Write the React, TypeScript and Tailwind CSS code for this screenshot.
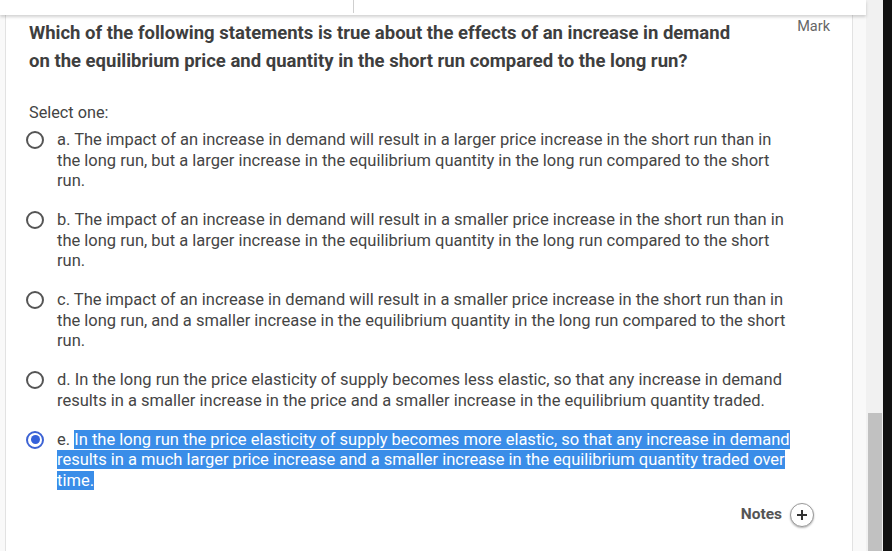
const options = [
  {
    key: "a",
    text: "The impact of an increase in demand will result in a larger price increase in the short run than in the long run, but a larger increase in the equilibrium quantity in the long run compared to the short run.",
  },
  {
    key: "b",
    text: "The impact of an increase in demand will result in a smaller price increase in the short run than in the long run, but a larger increase in the equilibrium quantity in the long run compared to the short run.",
  },
  {
    key: "c",
    text: "The impact of an increase in demand will result in a smaller price increase in the short run than in the long run, and a smaller increase in the equilibrium quantity in the long run compared to the short run.",
  },
  {
    key: "d",
    text: "In the long run the price elasticity of supply becomes less elastic, so that any increase in demand results in a smaller increase in the price and a smaller increase in the equilibrium quantity traded.",
  },
  {
    key: "e",
    text: "In the long run the price elasticity of supply becomes more elastic, so that any increase in demand results in a much larger price increase and a smaller increase in the equilibrium quantity traded over time.",
    selected: true,
  },
];

function Radio({ checked }: { checked?: boolean }) {
  if (checked) {
    return (
      <span className="mt-[1px] flex h-[18px] w-[18px] shrink-0 items-center justify-center rounded-full border-[2.5px] border-[#3d63d4] bg-white">
        <span className="h-[9px] w-[9px] rounded-full bg-[#3561da]" />
      </span>
    );
  }
  return <span className="mt-[1px] h-[18px] w-[18px] shrink-0 rounded-full border-2 border-[#555]" />;
}

export default function App() {
  return (
    <div
      className="flex h-[551px] w-[892px] overflow-hidden bg-[#111]"
      style={{ fontFamily: "Roboto, 'Liberation Sans', sans-serif" }}
    >
      <div className="flex w-[866px] flex-col bg-[#f9f9f9]">
        {/* top tab strip */}
        <div className="z-10 flex h-[15px] bg-white shadow-[0_2px_3px_rgba(0,0,0,0.18)]">
          <div className="h-[13px] w-[354px] border-r border-[#cfcfcf]" />
        </div>

        <div className="ml-[5px] flex w-[848px] flex-1 flex-col border-x border-[#e2e2e2] bg-white">
          <div className="flex justify-between">
            <h2 className="mt-[4px] w-[745px] pl-[23px] text-[18.5px] font-bold leading-[28px] text-[#3e3e3e]">
              Which of the following statements is true about the effects of an increase in demand on the
              equilibrium price and quantity in the short run compared to the long run?
            </h2>
            <span className="mr-[22px] mt-[3px] text-[14.5px] leading-[18px] text-[#666]">Mark</span>
          </div>

          <p className="mt-[27px] pl-[23px] text-[16.25px] leading-[21px] text-[#444]">Select one:</p>

          <div className="mt-[7px] flex flex-col gap-[18.5px] pl-[20px]">
            {options.map((o) => (
              <div key={o.key} className="flex items-start gap-[13px]">
                <Radio checked={o.selected} />
                <p className="w-[737px] text-[16.5px] leading-[20.5px] text-[#454545]">
                  {o.key}.{" "}
                  {o.selected ? (
                    <span className="bg-[#3a8de8] text-white [box-decoration-break:clone]">{o.text}</span>
                  ) : (
                    o.text
                  )}
                </p>
              </div>
            ))}
          </div>

          <div className="mr-[38px] mt-[12px] flex items-center justify-end gap-[8px]">
            <span className="text-[15.5px] font-bold text-[#555]">Notes</span>
            <span className="flex h-[24px] w-[24px] items-center justify-center rounded-full border border-[#9a9a9a] bg-white shadow-[0_1px_2px_rgba(0,0,0,0.3)]">
              <svg width="12" height="12" viewBox="0 0 12 12">
                <path d="M6 1v10M1 6h10" stroke="#333" strokeWidth="2" />
              </svg>
            </span>
          </div>
        </div>
      </div>

      {/* scrollbar */}
      <div className="flex w-[17px] flex-col bg-[#f1f1f1]">
        <div className="h-[413px]" />
        <div className="ml-[2px] w-[14px] flex-1 bg-[#c1c1c1]" />
      </div>
    </div>
  );
}
